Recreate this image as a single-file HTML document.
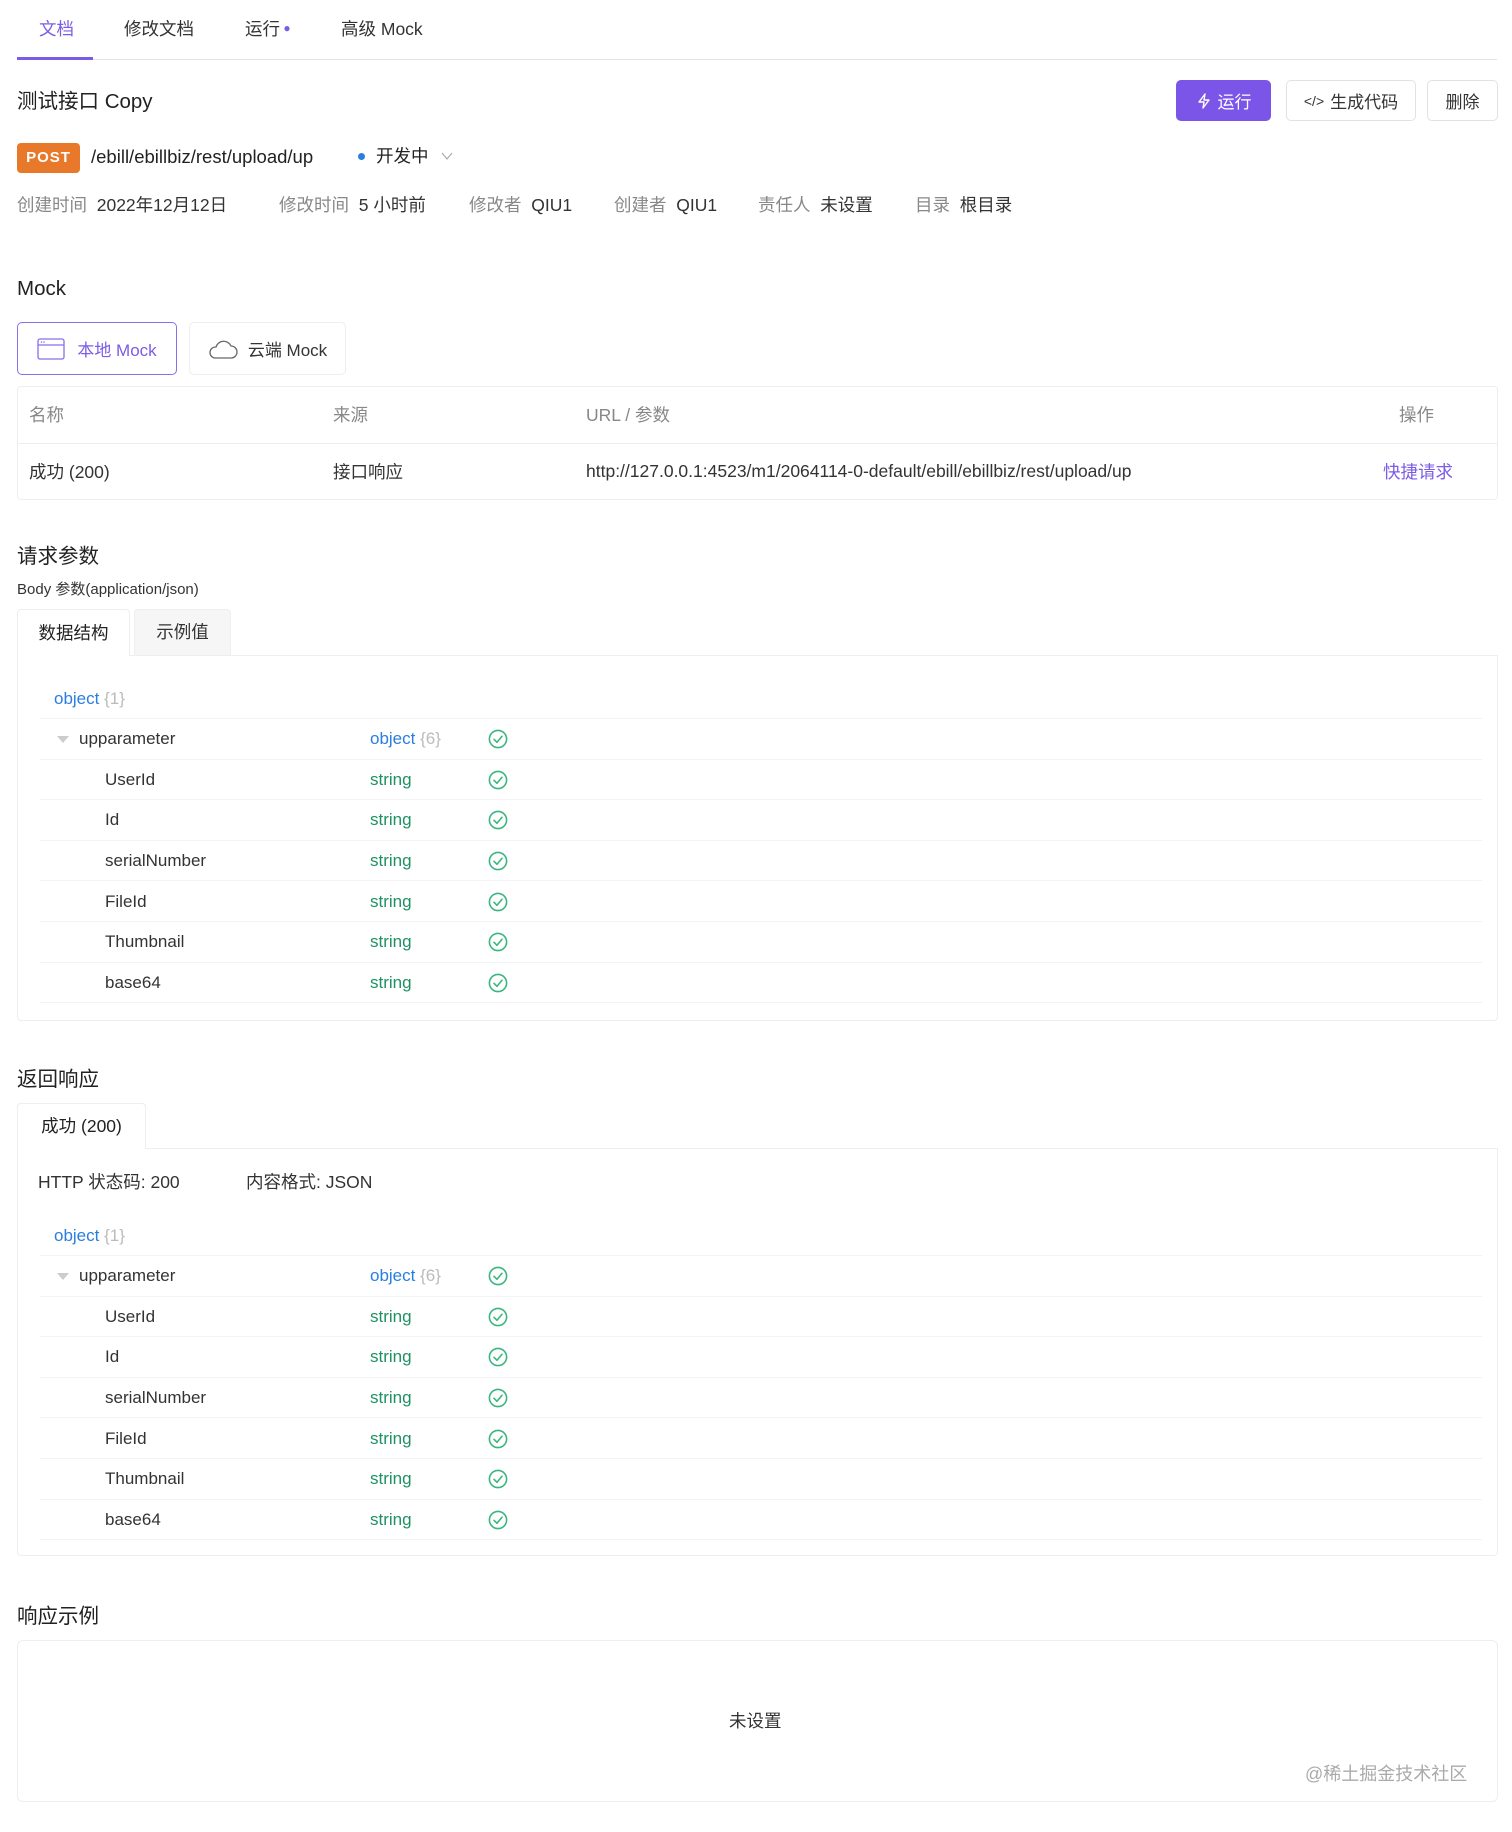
<!DOCTYPE html>
<html><head><meta charset="utf-8"><style>
*{box-sizing:border-box;margin:0;padding:0}
body{width:1512px;height:1832px;background:#fff;font-family:"Liberation Sans","Noto Sans CJK SC",sans-serif;color:#333;position:relative;overflow:hidden}
.a{position:absolute;white-space:nowrap;line-height:1.3}
.g{color:#888}
.btn{position:absolute;border:1px solid #e2e2e2;border-radius:5px;display:flex;align-items:center;justify-content:center;font-size:17px;color:#333}
.row{position:absolute;left:40px;right:30px;height:40px;border-bottom:1px solid #f3f3f3}
.row span{position:absolute;top:50%;transform:translateY(-50%);font-size:17px;white-space:nowrap}
.str{color:#1f9164}
.obj{color:#2a7ee0}
.br{color:#bbb}
.chk{position:absolute;top:50%;transform:translateY(-50%);left:448px;width:20px;height:20px}
</style></head><body>
<div class="a" style="left:39px;top:18px;font-size:17.5px;color:#7b5ce5">文档</div>
<div class="a" style="left:124px;top:18px;font-size:17.5px">修改文档</div>
<div class="a" style="left:245px;top:18px;font-size:17.5px">运行<span style="color:#7b5ce5;font-size:12px;vertical-align:3px"> ●</span></div>
<div class="a" style="left:341px;top:18px;font-size:17.5px">高级 Mock</div>
<div class="a" style="left:17px;top:59px;width:1480px;height:1px;background:#e4e4e4"></div>
<div class="a" style="left:17px;top:57px;width:76px;height:3px;background:#7b5ce5"></div>

<div class="a" style="left:17px;top:89px;font-size:20.5px;color:#222">测试接口 Copy</div>
<div class="btn" style="left:1176px;top:80px;width:95px;height:41px;background:#7b55e8;border-color:#7b55e8;color:#fff"><svg width="16" height="16" viewBox="0 0 16 16" style="margin-right:6px"><path d="M9 1L3 9h5l-1 6 6-8H8z" fill="none" stroke="#fff" stroke-width="1.4" stroke-linejoin="round"/></svg>运行</div>
<div class="btn" style="left:1286px;top:80px;width:130px;height:41px"><span style="font-size:14px;margin-right:6px">&lt;/&gt;</span>生成代码</div>
<div class="btn" style="left:1427px;top:80px;width:71px;height:41px">删除</div>

<div class="a" style="left:17px;top:143px;width:63px;height:30px;background:#e8782a;border-radius:4px;color:#fff;font-size:15px;font-weight:bold;display:flex;align-items:center;justify-content:center;letter-spacing:1px">POST</div>
<div class="a" style="left:91px;top:145px;font-size:18.5px;color:#222">/ebill/ebillbiz/rest/upload/up</div>
<div class="a" style="left:358px;top:153px;width:7px;height:7px;border-radius:50%;background:#2a7ee0"></div>
<div class="a" style="left:376px;top:145px;font-size:17.5px;color:#222">开发中</div>
<svg class="a" style="left:440px;top:149px" width="14" height="14" viewBox="0 0 14 14"><path d="M2 4l5 6 5-6" fill="none" stroke="#aaa" stroke-width="1.2"/></svg>

<div class="a" style="left:17px;top:194px;font-size:17.5px"><span class="g">创建时间</span>&nbsp; 2022年12月12日</div>
<div class="a" style="left:279px;top:194px;font-size:17.5px"><span class="g">修改时间</span>&nbsp; 5 小时前</div>
<div class="a" style="left:469px;top:194px;font-size:17.5px"><span class="g">修改者</span>&nbsp; QIU1</div>
<div class="a" style="left:614px;top:194px;font-size:17.5px"><span class="g">创建者</span>&nbsp; QIU1</div>
<div class="a" style="left:758px;top:194px;font-size:17.5px"><span class="g">责任人</span>&nbsp; 未设置</div>
<div class="a" style="left:915px;top:194px;font-size:17.5px"><span class="g">目录</span>&nbsp; 根目录</div>

<div class="a" style="left:17px;top:276px;font-size:20.5px;color:#222">Mock</div>
<div class="btn" style="left:17px;top:322px;width:160px;height:53px;border-color:#8a6ee8;color:#7b5ce5"><svg width="28" height="22" viewBox="0 0 28 22" style="margin-right:12px"><rect x="1" y="1" width="26" height="20" rx="2" fill="none" stroke="#8a6ee8" stroke-width="1.3"/><path d="M1 7h26" stroke="#8a6ee8" stroke-width="1.3"/><circle cx="4.5" cy="4" r=".8" fill="#8a6ee8"/><circle cx="7" cy="4" r=".8" fill="#8a6ee8"/></svg>本地 Mock</div>
<div class="btn" style="left:189px;top:322px;width:157px;height:53px;border-color:#eee"><svg width="30" height="20" viewBox="0 0 30 20" style="margin-right:10px"><path d="M7 19h16a6 6 0 0 0 0-12 8 8 0 0 0-15 1A5.5 5.5 0 0 0 7 19z" fill="none" stroke="#666" stroke-width="1.3"/></svg>云端 Mock</div>

<div class="a" style="left:17px;top:386px;width:1481px;height:114px;border:1px solid #eee;border-radius:4px"></div>
<div class="a" style="left:18px;top:443px;width:1479px;height:1px;background:#eee"></div>
<div class="a g" style="left:29px;top:404px;font-size:17.5px">名称</div>
<div class="a g" style="left:333px;top:404px;font-size:17.5px">来源</div>
<div class="a g" style="left:586px;top:404px;font-size:17.5px">URL / 参数</div>
<div class="a g" style="left:1399px;top:404px;font-size:17.5px">操作</div>
<div class="a" style="left:29px;top:461px;font-size:17.5px">成功 (200)</div>
<div class="a" style="left:333px;top:461px;font-size:17.5px">接口响应</div>
<div class="a" style="left:586px;top:459px;height:24px;line-height:24px;font-size:17.5px;font-family:'Liberation Sans',sans-serif">http://127.0.0.1:4523/m1/2064114-0-default/ebill/ebillbiz/rest/upload/up</div>
<div class="a" style="left:1383px;top:461px;font-size:17.5px;color:#7b5ce5">快捷请求</div>

<div class="a" style="left:17px;top:544px;font-size:20.5px;color:#222">请求参数</div>
<div class="a" style="left:17px;top:580px;font-size:15px">Body 参数(application/json)</div>
<div class="a" style="left:17px;top:655px;width:1481px;height:366px;border:1px solid #eee;border-top:none;border-radius:0 0 4px 4px"></div>
<div class="a" style="left:17px;top:655px;width:1481px;height:1px;background:#eee"></div>
<div class="a" style="left:17px;top:609px;width:113px;height:47px;border:1px solid #eee;border-bottom:none;background:#fff;border-radius:4px 4px 0 0;font-size:17.5px;color:#222;display:flex;align-items:center;justify-content:center">数据结构</div>
<div class="a" style="left:134px;top:609px;width:97px;height:46px;border:1px solid #eee;border-bottom:none;background:#f6f6f6;border-radius:4px 4px 0 0;font-size:17.5px;display:flex;align-items:center;justify-content:center">示例值</div>

<div id="t1"></div>

<div class="a" style="left:17px;top:1067px;font-size:20.5px;color:#222">返回响应</div>
<div class="a" style="left:17px;top:1148px;width:1481px;height:408px;border:1px solid #eee;border-top:none;border-radius:0 0 4px 4px"></div>
<div class="a" style="left:17px;top:1148px;width:1481px;height:1px;background:#eee"></div>
<div class="a" style="left:17px;top:1103px;width:129px;height:46px;border:1px solid #eee;border-bottom:none;background:#fff;border-radius:4px 4px 0 0;font-size:17.5px;color:#222;display:flex;align-items:center;justify-content:center">成功 (200)</div>
<div class="a" style="left:38px;top:1171px;font-size:17.5px">HTTP 状态码: 200</div>
<div class="a" style="left:246px;top:1171px;font-size:17.5px">内容格式: JSON</div>

<div class="a" style="left:17px;top:1604px;font-size:20.5px;color:#222">响应示例</div>
<div class="a" style="left:17px;top:1640px;width:1481px;height:162px;border:1px solid #eee;border-radius:6px"></div>
<div class="a" style="left:729px;top:1710px;font-size:17.5px">未设置</div>
<div class="a" style="left:1305px;top:1763px;font-size:18px;color:#aaa">@稀土掘金技术社区</div>

<script>
function tree(top){
 var chk='<svg class="chk" viewBox="0 0 20 20"><circle cx="10" cy="10" r="8.6" fill="none" stroke="#3cb680" stroke-width="1.6"/><path d="M6 10.3l3 3 5-6" fill="none" stroke="#3cb680" stroke-width="1.6" stroke-linecap="round" stroke-linejoin="round"/></svg>';
 var h='<div class="row" style="top:'+top+'px;left:40px"><span class="obj" style="left:14px">object <span class="br" style="position:static;transform:none">{1}</span></span></div>';
 var y=top+40.6;
 h+='<div class="row" style="top:'+y+'px"><svg style="position:absolute;left:17px;top:16px" width="12" height="8"><path d="M0 0h12L6 7z" fill="#ccc"/></svg><span style="left:39px">upparameter</span><span class="obj" style="left:330px">object <span class="br" style="position:static;transform:none">{6}</span></span>'+chk+'</div>';
 var n=['UserId','Id','serialNumber','FileId','Thumbnail','base64'];
 for(var i=0;i<n.length;i++){y+=40.6;h+='<div class="row" style="top:'+y+'px"><span style="left:65px">'+n[i]+'</span><span class="str" style="left:330px">string</span>'+chk+'</div>';}
 return h;
}
document.getElementById('t1').outerHTML=tree(679)+tree(1216);
</script>
</body></html>
